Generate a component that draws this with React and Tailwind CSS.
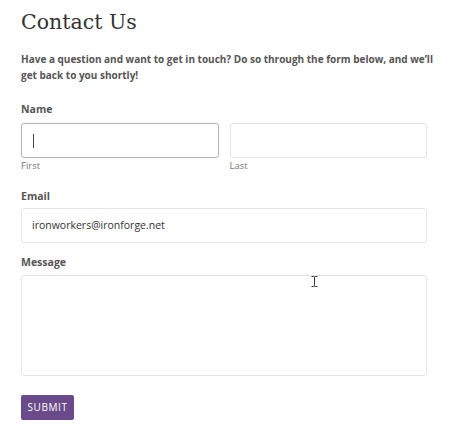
import React from "react";

export default function App() {
  const sans = { fontFamily: '"Open Sans", "Noto Sans", sans-serif' };
  return (
    <div className="w-[474px] h-[440px] bg-white overflow-hidden relative" style={sans}>
      <div className="pl-[21px] pr-[47px] pt-[7px]">
        <h1 className="text-[20.5px] leading-[30px] text-[#333]" style={{ fontFamily: '"DejaVu Serif", serif', fontWeight: 300 }}>
          Contact Us
        </h1>
        <p className="mt-[14px] w-[430px] text-[10px] leading-[16px] font-bold text-[#555]">
          Have a question and want to get in touch? Do so through the form below, and we’ll get back to you shortly!
        </p>
        <div className="mt-[18px] text-[10.5px] leading-[16px] font-bold text-[#555]">Name</div>
        <div className="mt-[6px] flex gap-[11px]">
          <div className="flex-1">
            <div className="h-[35px] border border-[#b5b5b5] rounded-[3px] flex items-center px-[11px] shadow-[0_0_2px_rgba(0,0,0,0.1)]">
              <div className="w-[1px] h-[14px] bg-[#444]" />
            </div>
            <div className="mt-[1px] text-[9.5px] leading-[13px] text-[#777]">First</div>
          </div>
          <div className="flex-1">
            <div className="h-[35px] border border-[#e4e4e4] rounded-[3px]" />
            <div className="mt-[1px] text-[9.5px] leading-[13px] text-[#777]">Last</div>
          </div>
        </div>
        <div className="mt-[16px] text-[10.5px] leading-[16px] font-bold text-[#555]">Email</div>
        <div className="mt-[4px] h-[35px] border border-[#e4e4e4] rounded-[3px] flex items-center px-[10px] text-[10.5px] text-[#333]">
          ironworkers@ironforge.net
        </div>
        <div className="mt-[11px] text-[10.5px] leading-[16px] font-bold text-[#555]">Message</div>
        <div className="mt-[5px] h-[101px] border border-[#e4e4e4] rounded-[3px]" />
        <button className="mt-[19px] h-[25px] w-[53px] bg-[#6b4a8c] rounded-[2px] text-white text-[10px] tracking-[0.6px] font-medium flex items-center justify-center">
          SUBMIT
        </button>
      </div>
      <svg className="absolute left-[311px] top-[276px]" width="7" height="11" viewBox="0 0 7 11">
        <path d="M0.5 0.5 H2.5 M4.5 0.5 H6.5 M2.5 0.5 Q3.5 0.5 3.5 1.5 V9.5 Q3.5 10.5 2.5 10.5 H0.5 M3.5 1.5 Q3.5 0.5 4.5 0.5 M3.5 9.5 Q3.5 10.5 4.5 10.5 H6.5" stroke="#333" strokeWidth="1" fill="none" />
      </svg>
    </div>
  );
}
